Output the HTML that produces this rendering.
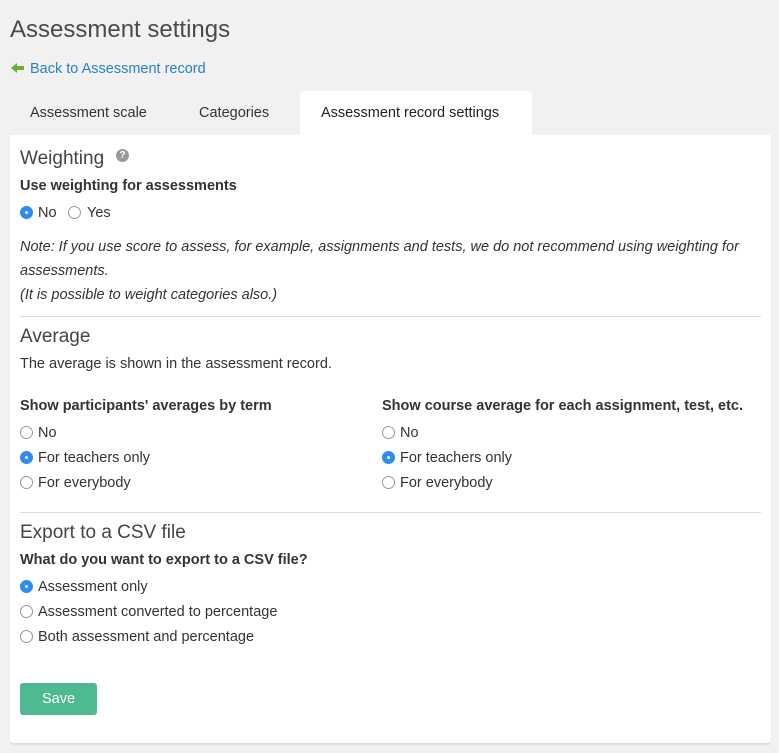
<!DOCTYPE html>
<html><head><style>
body{margin:0;width:779px;height:753px;background:#f1f1f1;font-family:"Liberation Sans",sans-serif;color:#333;position:relative;overflow:hidden}
.a{position:absolute;white-space:nowrap}
h1{position:absolute;left:10px;top:16px;margin:0;font-weight:normal;font-size:24px;color:#4a4a4a}
.link{left:30px;top:61px;font-size:14.5px;color:#2a7fc9}
.tab{top:105px;font-size:14.5px;color:#333}
.active{position:absolute;left:300px;top:91px;width:232px;height:46px;background:#fff;border-radius:3px 3px 0 0}
.panel{position:absolute;left:10px;top:135px;width:761px;height:608px;background:#fff;border-radius:0 0 3px 3px;box-shadow:0 2px 1px #ddd}
.h{font-size:19px;color:#444;margin-top:2px}
.b{font-weight:bold;font-size:14.5px;color:#333;margin-top:1px}
.t{font-size:14.5px;color:#333;margin-top:1px}
.i{font-style:italic;font-size:14.5px;color:#333;margin-top:1px}
.r{position:absolute;width:13px;height:13px;border:1px solid #999;border-radius:50%;background:#fff;box-sizing:border-box}
.r.on{background:#2d8cf0;border-color:#2d8cf0}
.r.on::after{content:"";position:absolute;left:4px;top:4px;width:3px;height:3px;background:#fff;border-radius:50%}
.hr{position:absolute;left:20px;width:741px;height:1px;background:#ddd}
.btn{position:absolute;left:20px;top:683px;width:77px;height:32px;background:#4dba91;border-radius:3px;color:#fff;font-size:14.5px;text-align:center;line-height:32px}
</style></head><body>
<h1>Assessment settings</h1>
<svg class="a" style="left:11px;top:62px" width="14" height="12" viewBox="0 0 14 12"><path d="M0 6L6 1V4H13V8H6V11Z" fill="#6ab034"/></svg>
<div class="a link">Back to Assessment record</div>
<div class="a tab" style="left:30px">Assessment scale</div>
<div class="a tab" style="left:199px">Categories</div>
<div class="panel"></div>
<div class="active"></div>
<div class="a tab" style="left:321px;color:#222">Assessment record settings</div>

<div class="a h" style="left:20px;top:146px">Weighting</div>
<div class="a" style="left:116px;top:149px;width:13px;height:13px;border-radius:50%;background:#999;color:#fff;font-size:10px;font-weight:bold;text-align:center;line-height:13px">?</div>
<div class="a b" style="left:20px;top:177px">Use weighting for assessments</div>
<div class="r on" style="left:20px;top:206px"></div><div class="a t" style="left:38px;top:204px">No</div>
<div class="r" style="left:68px;top:206px"></div><div class="a t" style="left:87px;top:204px">Yes</div>
<div class="a i" style="left:20px;top:238px">Note: If you use score to assess, for example, assignments and tests, we do not recommend using weighting for</div>
<div class="a i" style="left:20px;top:262px">assessments.</div>
<div class="a i" style="left:20px;top:286px">(It is possible to weight categories also.)</div>
<div class="hr" style="top:316px"></div>

<div class="a h" style="left:20px;top:324px">Average</div>
<div class="a t" style="left:20px;top:355px">The average is shown in the assessment record.</div>
<div class="a b" style="left:20px;top:397px">Show participants' averages by term</div>
<div class="r" style="left:20px;top:426px"></div><div class="a t" style="left:38px;top:424px">No</div>
<div class="r on" style="left:20px;top:451px"></div><div class="a t" style="left:38px;top:449px">For teachers only</div>
<div class="r" style="left:20px;top:476px"></div><div class="a t" style="left:38px;top:474px">For everybody</div>
<div class="a b" style="left:382px;top:397px">Show course average for each assignment, test, etc.</div>
<div class="r" style="left:382px;top:426px"></div><div class="a t" style="left:400px;top:424px">No</div>
<div class="r on" style="left:382px;top:451px"></div><div class="a t" style="left:400px;top:449px">For teachers only</div>
<div class="r" style="left:382px;top:476px"></div><div class="a t" style="left:400px;top:474px">For everybody</div>
<div class="hr" style="top:512px"></div>

<div class="a h" style="left:20px;top:520px">Export to a CSV file</div>
<div class="a b" style="left:20px;top:551px">What do you want to export to a CSV file?</div>
<div class="r on" style="left:20px;top:580px"></div><div class="a t" style="left:38px;top:578px">Assessment only</div>
<div class="r" style="left:20px;top:605px"></div><div class="a t" style="left:38px;top:603px">Assessment converted to percentage</div>
<div class="r" style="left:20px;top:630px"></div><div class="a t" style="left:38px;top:628px">Both assessment and percentage</div>
<div class="btn">Save</div>
</body></html>
